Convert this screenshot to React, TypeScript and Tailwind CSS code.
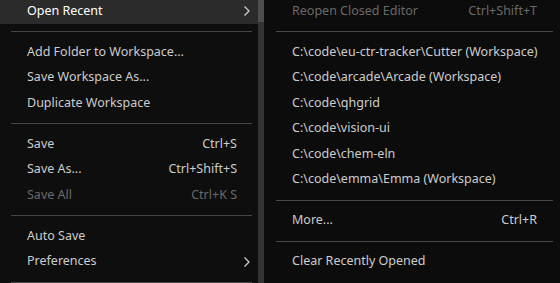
type Item = { label?: string; keys?: string; sub?: boolean; disabled?: boolean; active?: boolean; sep?: boolean };

const fileMenu: Item[] = [
  { label: 'Open Recent', sub: true, active: true },
  { sep: true },
  { label: 'Add Folder to Workspace...' },
  { label: 'Save Workspace As...' },
  { label: 'Duplicate Workspace' },
  { sep: true },
  { label: 'Save', keys: 'Ctrl+S' },
  { label: 'Save As...', keys: 'Ctrl+Shift+S' },
  { label: 'Save All', keys: 'Ctrl+K S', disabled: true },
  { sep: true },
  { label: 'Auto Save' },
  { label: 'Preferences', sub: true },
  { sep: true },
];

const recentMenu: Item[] = [
  { label: 'Reopen Closed Editor', keys: 'Ctrl+Shift+T', disabled: true },
  { sep: true },
  { label: 'C:\\code\\eu-ctr-tracker\\Cutter (Workspace)' },
  { label: 'C:\\code\\arcade\\Arcade (Workspace)' },
  { label: 'C:\\code\\qhgrid' },
  { label: 'C:\\code\\vision-ui' },
  { label: 'C:\\code\\chem-eln' },
  { label: 'C:\\code\\emma\\Emma (Workspace)' },
  { sep: true },
  { label: 'More...', keys: 'Ctrl+R' },
  { sep: true },
  { label: 'Clear Recently Opened' },
];

function Chevron() {
  return (
    <svg width="8" height="12" viewBox="0 0 8 12" fill="none" className="shrink-0">
      <path d="M1.5 1.5 6 6l-4.5 4.5" stroke="currentColor" strokeWidth="1.3" />
    </svg>
  );
}

function MenuList({ items, textPad, keysPad, sepX }: { items: Item[]; textPad: string; keysPad: string; sepX: string }) {
  return (
    <div className="-mt-[1.75px] flex flex-col">
      {items.map((item, i) =>
        item.sep ? (
          <div key={i} className={`flex h-[15.5px] items-center ${sepX}`}>
            <div className="h-px w-full bg-[#474747]" />
          </div>
        ) : (
          <div
            key={i}
            className={`flex h-[25.5px] shrink-0 items-center ${textPad} ${
              item.active ? 'bg-[#2b2b2b] text-white' : item.disabled ? 'text-[#6a6a6a]' : 'text-[#cccccc]'
            }`}
          >
            <span className="flex-1 whitespace-nowrap">{item.label}</span>
            {item.keys && <span className={`whitespace-nowrap ${keysPad}`}>{item.keys}</span>}
            {item.sub && (
              <span className="mr-[7px] text-[#cccccc]">
                <Chevron />
              </span>
            )}
          </div>
        ),
      )}
    </div>
  );
}

export default function App() {
  return (
    <div
      className="flex h-[283px] w-[560px] overflow-hidden bg-[#0c0c0c] text-[12.5px]"
      style={{ fontFamily: '"Segoe UI", "Noto Sans", "Open Sans", sans-serif' }}
    >
      <div className="w-[258px] shrink-0 bg-[#0e0e0e]">
        <MenuList items={fileMenu} textPad="pl-[27px]" keysPad="mr-[21px]" sepX="pl-[11px] pr-[6px]" />
      </div>
      <div className="flex w-[6px] shrink-0 flex-col">
        <div className="h-[22px] bg-[#4e4e4e]" />
        <div className="flex-1 bg-[#333333]" />
      </div>
      <div className="flex-1 bg-[#0c0c0c]">
        <MenuList items={recentMenu} textPad="pl-[28px]" keysPad="mr-[23px]" sepX="pl-[12px] pr-[7px]" />
      </div>
    </div>
  );
}
